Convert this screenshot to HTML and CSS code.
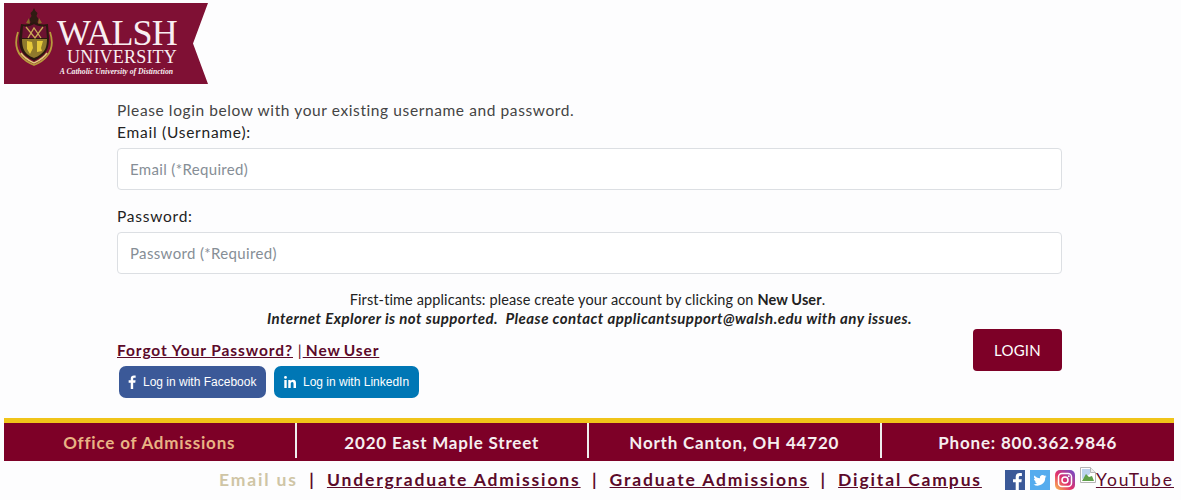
FILE: index.html
```html
<!DOCTYPE html>
<html lang="en">
<head>
<meta charset="utf-8">
<title>Walsh University Login</title>
<link rel="stylesheet" href="styles.css">
</head>
<body>
<header class="brand">
  <div class="banner">
    <svg class="crest" viewBox="0 0 40 60" width="40" height="60" aria-hidden="true">
      <path d="M19 0l1.500 3 2 2-1 3 2 3-1 3 1 3h-9l1-3-1-3 2-3-1-3 2-2z" fill="#2f1c12"/>
      <path d="M14 10l-3 5 4 1zM24 10l3 5-4 1z" fill="#8a6a2a"/>
      <path d="M6 16c5 1 9 0 13-2 4 2 9 3 14 2l1 14c0 9-2 14-7 18-3 2-6 4-8 5-2-1-5-3-8-5-5-4-7-9-7-18z" fill="#2b1810"/>
      <path d="M8 18c4 1 8 0 11-2 3 2 8 3 12 2l1 12H7z" fill="#6b1230"/>
      <path d="M11 19l9 11 8-11M13 30l6-10 7 10" fill="none" stroke="#c9ab55" stroke-width="1.300"/>
      <path d="M7 31h25c0 8-2 12-6 15-2 2-5 3-7 4-2-1-5-2-7-4-3-3-5-7-5-15z" fill="#8f7a2c"/>
      <path d="M12 33l5 1 1 6-3 6-3-5zM22 33h6l-2 7 1 3-5 1z" fill="#e6c93a"/>
      <path d="M3 24c-3 9-2 18 3 24 3 4 8 7 13 9 5-2 10-5 13-9 5-6 6-15 3-24" fill="none" stroke="#b89a3c" stroke-width="1.800"/>
      <path d="M6 45c4 6 9 8 13 10 4-2 9-4 13-10" fill="none" stroke="#e0cf7a" stroke-width="1.500"/>
    </svg>
    <div class="wordmark">
      <span class="wm-walsh">WALSH</span>
      <span class="wm-univ">UNIVERSITY</span>
      <span class="wm-tag">A Catholic University of Distinction</span>
    </div>
  </div>
</header>

<main class="login">
  <p class="intro">Please login below with your existing username and password.</p>
  <label class="label" for="email">Email (Username):</label>
  <input class="field" id="email" type="text" placeholder="Email (*Required)">
  <label class="label label-pw" for="pw">Password:</label>
  <input class="field" id="pw" type="password" placeholder="Password (*Required)">
  <p class="note">First-time applicants: please create your account by clicking on <b>New User</b>.</p>
  <p class="warn">Internet Explorer is not supported.&nbsp; Please contact applicantsupport@walsh.edu with any issues.</p>
  <div class="actions">
    <div class="actions-left">
      <div class="links"><a href="#">Forgot Your Password?</a><span class="pipe"> |</span><a class="newuser" href="#"> New User</a></div>
      <div class="socials">
        <a class="sbtn fb" href="#">
          <svg viewBox="0 0 10 18" width="8" height="14" aria-hidden="true"><path d="M6.500 18V10h2.700l.4-3.100H6.500V4.900c0-.9.3-1.500 1.600-1.500h1.600V.6C9.400.6 8.500.5 7.400.5 5 .5 3.400 1.900 3.400 4.600v2.300H.7V10h2.700v8z" fill="#fff"/></svg>
          Log in with Facebook</a>
        <a class="sbtn li" href="#">
          <svg viewBox="0 0 16 16" width="12" height="12" aria-hidden="true"><path d="M.4 5.300h3.200V16H.4zM2 0a1.900 1.900 0 1 1 0 3.800A1.900 1.900 0 0 1 2 0zM5.700 5.300h3.100v1.500c.5-.9 1.600-1.800 3.200-1.800 3.400 0 4 2.200 4 5.100V16h-3.300v-5.200c0-1.300 0-2.900-1.700-2.900s-2 1.400-2 2.800V16H5.700z" fill="#fff"/></svg>
          Log in with LinkedIn</a>
      </div>
    </div>
    <button class="login-btn" type="button">LOGIN</button>
  </div>
</main>

<footer class="foot">
  <div class="bar">
    <div class="cell cell-gold">Office of Admissions</div>
    <div class="cell">2020 East Maple Street</div>
    <div class="cell">North Canton, OH 44720</div>
    <div class="cell">Phone: 800.362.9846</div>
  </div>
  <div class="footlinks">
    <a class="email" href="#">Email us</a>
    <span class="sep">|</span>
    <a href="#">Undergraduate Admissions</a>
    <span class="sep">|</span>
    <a href="#">Graduate Admissions</a>
    <span class="sep">|</span>
    <a href="#">Digital Campus</a>
    <span class="icons">
      <svg viewBox="0 0 20 20" width="20" height="20" aria-hidden="true"><rect width="20" height="20" fill="#3b5998"/><path d="M13.800 20v-7.700h2.600l.4-3h-3V7.400c0-.9.2-1.500 1.500-1.500h1.600V3.200c-.3 0-1.200-.1-2.300-.1-2.300 0-3.900 1.400-3.900 4v2.200H8v3h2.700V20z" fill="#fff"/></svg>
      <svg viewBox="0 0 20 20" width="20" height="20" aria-hidden="true"><rect width="20" height="20" fill="#55acee"/><path d="M16.500 6.200c-.5.200-1 .4-1.500.4.500-.3 1-.8 1.200-1.400-.5.300-1.100.5-1.700.6a2.700 2.700 0 0 0-4.600 2.400c-2.200-.1-4.200-1.200-5.500-2.800-.7 1.200-.4 2.800.8 3.600-.4 0-.8-.1-1.200-.3 0 1.300.9 2.400 2.100 2.700-.4.100-.8.100-1.200 0 .3 1.100 1.300 1.800 2.500 1.900A5.400 5.400 0 0 1 3.500 14.400a7.600 7.600 0 0 0 11.700-6.700c.5-.4 1-.9 1.300-1.500z" fill="#fff"/></svg>
      <svg viewBox="0 0 20 20" width="20" height="20" aria-hidden="true"><defs><linearGradient id="ig" x1="0" y1="1" x2="1" y2="0"><stop offset="0" stop-color="#fdc14c"/><stop offset=".45" stop-color="#e1306c"/><stop offset="1" stop-color="#6a4fd0"/></linearGradient></defs><rect width="20" height="20" rx="5" fill="url(#ig)"/><rect x="3.500" y="3.500" width="13" height="13" rx="3.500" fill="none" stroke="#fff" stroke-width="1.500"/><circle cx="10" cy="10" r="3" fill="none" stroke="#fff" stroke-width="1.500"/><circle cx="13.800" cy="6.200" r=".9" fill="#fff"/></svg>
      <span class="yt">
        <svg class="broken" viewBox="0 0 16 16" width="16" height="16" aria-hidden="true"><path d="M.5.500h10l5 5v10H.5z" fill="#fff" stroke="#b5b5b5"/><path d="M10.500.500v5h5" fill="#eee" stroke="#b5b5b5"/><path d="M2 2h8v5L2 12z" fill="#bcd3ee"/><path d="M2 14l4-7 3 3 3-1 2 5z" fill="#5fa04a"/></svg><a href="#">YouTube</a>
      </span>
    </span>
  </div>
</footer>
</body>
</html>
```
FILE: styles.css
```css
* { box-sizing: border-box; }
html, body { margin: 0; padding: 0; }
body {
  width: 1181px;
  height: 500px;
  overflow: hidden;
  background: #fdfdfe;
  font-family: "Lato", "Open Sans", sans-serif;
  color: #333;
  padding: 3px 7px 0 4px;
}
.brand { height: 81px; }
.banner {
  width: 204px;
  height: 81px;
  background: #7f1034;
  clip-path: polygon(0 0, 100% 0, 189px 50%, 100% 100%, 0 100%);
  display: flex;
  color: #f8eef1;
  padding: 5px 0 0 11px;
}
.crest { flex: none; }
.wordmark {
  display: flex;
  flex-direction: column;
  align-items: flex-end;
  font-family: "Liberation Serif", serif;
  width: 122px;
  line-height: 1;
}
.wm-walsh { font-size: 36px; letter-spacing: -.8px; margin-top: 10px; line-height: 30px; }
.wm-univ { font-size: 18px; letter-spacing: .2px; line-height: 18px; }
.wm-tag { font-size: 7.700px; font-style: italic; font-weight: bold; margin-top: 2px; margin-right: 4px; white-space: nowrap; }

.login {
  width: 945px;
  margin: 16px 0 0 113px;
  display: flex;
  flex-direction: column;
  font-size: 15.500px;
  letter-spacing: .6px;
}
.intro { margin: 0 0 1px; line-height: 21px; color: #444; }
.label { line-height: 21px; color: #222; letter-spacing: .75px; }
.field {
  display: block;
  width: 100%;
  height: 42px;
  margin-top: 5px;
  border: 1px solid #dcdfe3;
  border-radius: 4px;
  background: #fff;
  padding: 0 12px;
  font: inherit;
  font-size: 15px;
  letter-spacing: .35px;
  color: #333;
}
.field::placeholder { color: #868e96; opacity: 1; }
.label-pw { margin-top: 16px; }
.note { margin: 15px 0 0; padding-right: 4px; text-align: center; font-size: 14.500px; letter-spacing: .12px; line-height: 21px; color: #222; }
.note b { font-weight: 700; }
.warn { margin: -2px 0 0; text-align: center; font-size: 15px; letter-spacing: .45px; font-style: italic; font-weight: 700; line-height: 20px; color: #222; }
.actions { display: flex; justify-content: space-between; align-items: flex-start; margin-top: 10px; }
.links { line-height: 22px; font-weight: 700; color: #5c0a2a; letter-spacing: .9px; white-space: pre; margin-top: 1px; }
.links a { color: #5c0a2a; }
.links .newuser { word-spacing: -1.500px; }
.pipe { font-weight: 400; }
.socials { display: flex; gap: 8px; margin: 5px 0 0 2px; }
.sbtn {
  display: flex;
  align-items: center;
  gap: 7px;
  height: 32px;
  padding: 0 9px;
  border-radius: 7px;
  color: #fff;
  text-decoration: none;
  font-family: "Liberation Sans", sans-serif;
  font-size: 12px;
  letter-spacing: 0;
  white-space: nowrap;
}
.sbtn svg { flex: none; }
.fb { background: #3b5998; width: 147px; }
.li { background: #0077b5; width: 145px; padding-left: 10px; }
.login-btn {
  width: 89px;
  height: 42px;
  margin-top: -9px;
  border: 0;
  border-radius: 4px;
  background: #7d0027;
  color: #fff;
  font: inherit;
  font-size: 15px;
  letter-spacing: .25px;
}

.foot { position: absolute; left: 4px; top: 418px; width: 1170px; }
.bar {
  height: 43px;
  border-top: 5px solid #f0c419;
  background: #7d0027;
  display: grid;
  grid-template-columns: repeat(4, 1fr);
  padding: 0 0 3px;
}
.cell {
  display: flex;
  align-items: center;
  justify-content: center;
  padding-top: 4px;
  color: #f6eef0;
  font-weight: 700;
  font-size: 17px;
  letter-spacing: .8px;
  border-right: 2px solid #eee;
}
.cell:last-child { border-right: 0; }
.cell-gold { color: #e9b384; }
.footlinks {
  display: flex;
  align-items: center;
  justify-content: flex-end;
  height: 37px;
  font-size: 17.500px;
  font-weight: 700;
  letter-spacing: 1.850px;
  color: #5c0a2a;
  white-space: nowrap;
}
.footlinks a { color: #5c0a2a; }
.footlinks .email { color: #cfc5a5; text-decoration: none; }
.sep { margin: 0 11.300px; }
.icons { display: flex; align-items: center; gap: 5px; margin-left: 23px; }
.yt { display: flex; align-items: flex-start; font-weight: 400; letter-spacing: 2px; }
.broken { margin-top: -2px; }
```
